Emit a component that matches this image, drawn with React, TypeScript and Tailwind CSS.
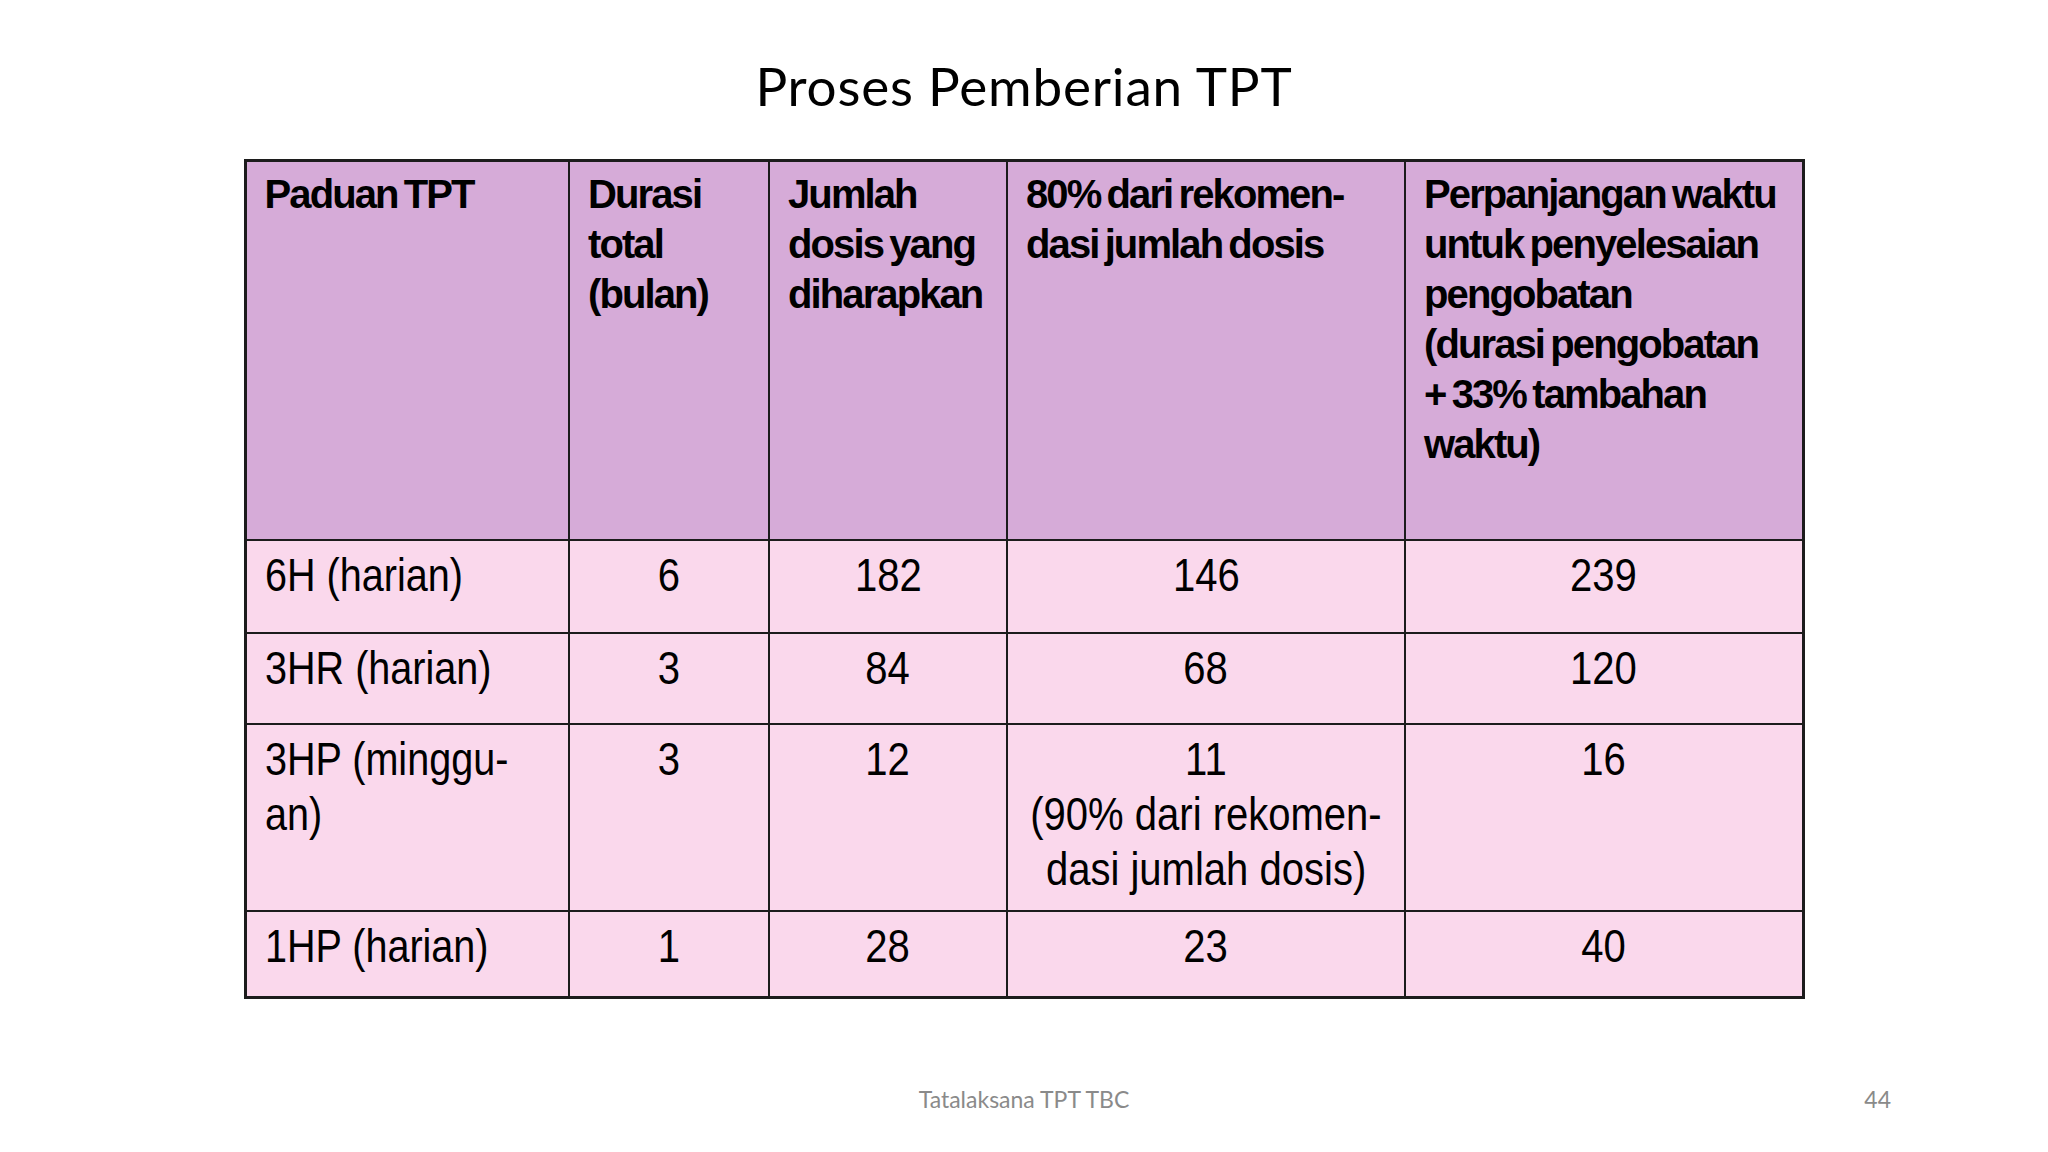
import React from "react";

interface Row {
    name: string[];
    durasi: string;
    jumlah: string;
    delapanPuluh: string[];
    perpanjangan: string;
    height: string;
}

const rows: Row[] = [
    { name: ["6H (harian)"], durasi: "6", jumlah: "182", delapanPuluh: ["146"], perpanjangan: "239", height: "h-[93px]" },
    { name: ["3HR (harian)"], durasi: "3", jumlah: "84", delapanPuluh: ["68"], perpanjangan: "120", height: "h-[91px]" },
    {
        name: ["3HP (minggu-", "an)"],
        durasi: "3",
        jumlah: "12",
        delapanPuluh: ["11", "(90% dari rekomen-", "dasi jumlah dosis)"],
        perpanjangan: "16",
        height: "h-[187px]",
    },
    { name: ["1HP (harian)"], durasi: "1", jumlah: "28", delapanPuluh: ["23"], perpanjangan: "40", height: "h-[86px]" },
];

const th =
    "border-2 border-[#1c1c1c] align-top text-left pl-[18px] pr-[8px] pt-[7px] font-bold text-[40px] leading-[50px] tracking-[-1.9px] [word-spacing:-3px] whitespace-nowrap";
const td = "border-2 border-[#1c1c1c] align-top pt-[7px] text-[46px] leading-[55px] whitespace-nowrap";

// the slide uses a narrow sans for the body cells
function Lines({ lines, left }: { lines: string[]; left?: boolean }) {
    return (
        <div className={left ? "flex flex-col items-start" : "flex flex-col items-center"}>
            {lines.map((line, i) => (
                <span
                    key={i}
                    className={
                        left
                            ? "inline-block scale-x-[0.86] origin-left"
                            : "inline-block scale-x-[0.87] origin-center"
                    }
                >
                    {line}
                </span>
            ))}
        </div>
    );
}

export default function App() {
    return (
        <div className="w-[2048px] h-[1152px] bg-white flex flex-col text-black">
            <h1 className="pt-[54px] text-center text-[53px] leading-[1.2] tracking-[0.8px] font-normal font-['Lato',sans-serif]">
                Proses Pemberian TPT
            </h1>

            <div className="mt-[41px] flex justify-center">
                <table className="table-fixed border-collapse border-[3px] border-[#1c1c1c] w-[1558px] font-['Liberation_Sans',Arial,sans-serif]">
                    <colgroup>
                        <col className="w-[324px]" />
                        <col className="w-[200px]" />
                        <col className="w-[238px]" />
                        <col className="w-[398px]" />
                        <col className="w-[398px]" />
                    </colgroup>
                    <thead className="bg-[#d6abd8]">
                        <tr className="h-[380px]">
                            <th className={th}>Paduan TPT</th>
                            <th className={th}>
                                Durasi
                                <br />
                                total
                                <br />
                                (bulan)
                            </th>
                            <th className={th}>
                                Jumlah
                                <br />
                                dosis yang
                                <br />
                                diharapkan
                            </th>
                            <th className={th}>
                                80% dari rekomen-
                                <br />
                                dasi jumlah dosis
                            </th>
                            <th className={th}>
                                Perpanjangan waktu
                                <br />
                                untuk penyelesaian
                                <br />
                                pengobatan
                                <br />
                                (durasi pengobatan
                                <br />
                                + 33% tambahan
                                <br />
                                waktu)
                            </th>
                        </tr>
                    </thead>
                    <tbody className="bg-[#fad8ec]">
                        {rows.map((row, i) => (
                            <tr key={i} className={row.height}>
                                <td className={`${td} pl-[18px]`}>
                                    <Lines lines={row.name} left />
                                </td>
                                <td className={td}>
                                    <Lines lines={[row.durasi]} />
                                </td>
                                <td className={td}>
                                    <Lines lines={[row.jumlah]} />
                                </td>
                                <td className={td}>
                                    <Lines lines={row.delapanPuluh} />
                                </td>
                                <td className={td}>
                                    <Lines lines={[row.perpanjangan]} />
                                </td>
                            </tr>
                        ))}
                    </tbody>
                </table>
            </div>

            <div className="mt-[87px] grid grid-cols-[1fr_auto_1fr] items-baseline font-['Lato',sans-serif] text-[23px] leading-[1.2] text-[#8a8a8a]">
                <div />
                <div>Tatalaksana TPT TBC</div>
                <div className="text-right pr-[157px]">44</div>
            </div>
        </div>
    );
}
